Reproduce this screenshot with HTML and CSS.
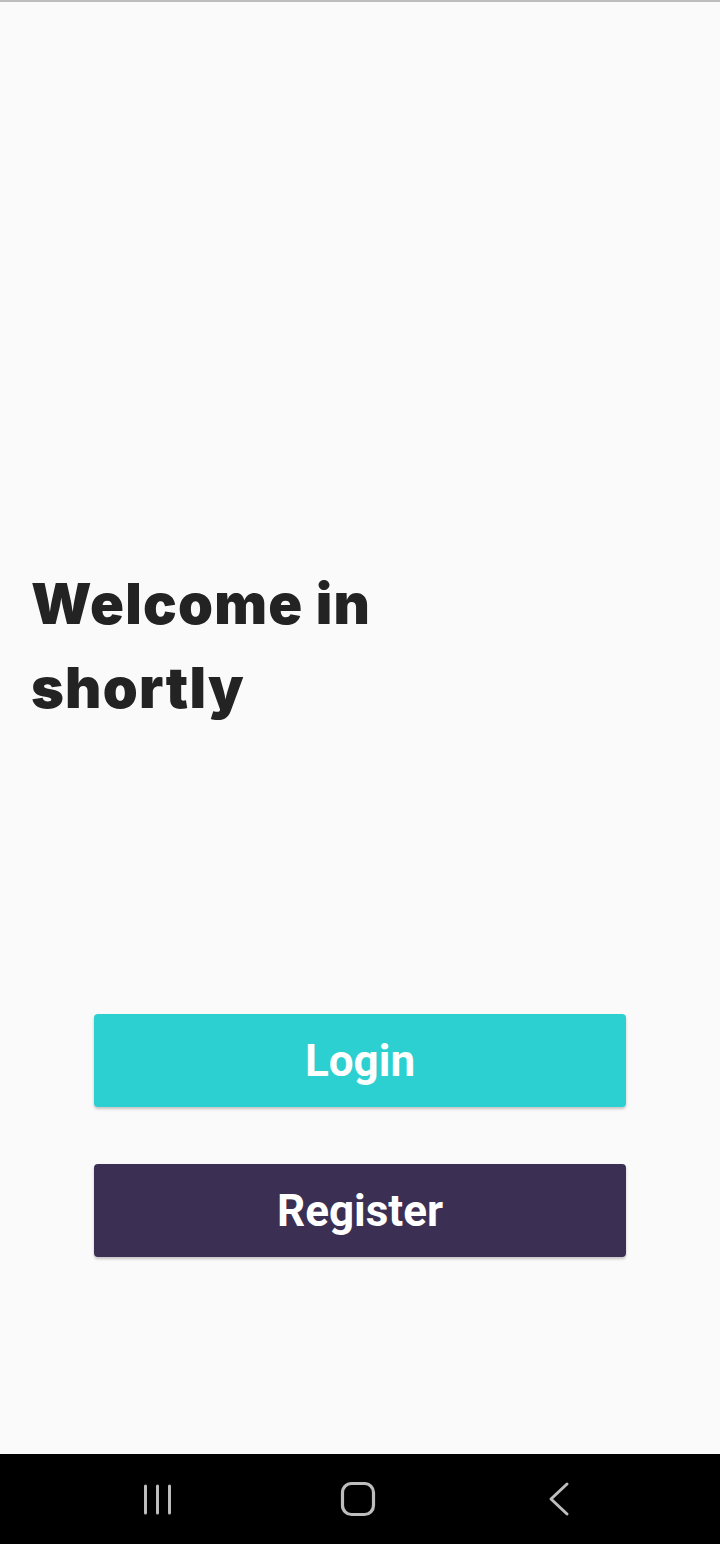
FILE: index.html
```html
<!DOCTYPE html>
<html>
<head>
<meta charset="utf-8">
<link rel="stylesheet" href="styles.css">
</head>
<body>
<div class="screen">
  <div class="topline"></div>
  <main class="content">
    <h1 class="title">Welcome in<br>shortly</h1>
    <div class="actions">
      <button class="btn btn-login">Login</button>
      <button class="btn btn-register">Register</button>
    </div>
  </main>
  <nav class="navbar">
    <svg class="nav-icon" width="40" height="40" viewBox="0 0 40 40">
      <g stroke="#bdbdbd" stroke-width="3" stroke-linecap="round" fill="none">
        <line x1="7.5" y1="7" x2="7.5" y2="34"/>
        <line x1="19.5" y1="7" x2="19.5" y2="34"/>
        <line x1="31.5" y1="7" x2="31.5" y2="34"/>
      </g>
    </svg>
    <svg class="nav-icon" width="40" height="40" viewBox="0 0 40 40">
      <rect x="4.5" y="4.5" width="31" height="31" rx="9" stroke="#bdbdbd" stroke-width="3.2" fill="none"/>
    </svg>
    <svg class="nav-icon" width="40" height="40" viewBox="0 0 40 40">
      <polyline points="29,5 13,20 29,35" stroke="#bdbdbd" stroke-width="3" stroke-linecap="round" stroke-linejoin="round" fill="none"/>
    </svg>
  </nav>
</div>
</body>
</html>
```
FILE: styles.css
```css
html, body {
  margin: 0;
  padding: 0;
  background: #fafafa;
}
.screen {
  width: 720px;
  height: 1544px;
  display: flex;
  flex-direction: column;
  background: #fafafa;
}
.topline {
  height: 2px;
  background: #bdbdbd;
  flex: none;
}
.content {
  flex: 1;
  display: flex;
  flex-direction: column;
  padding: 0;
}
.title {
  margin: 560px 0 0 31px;
  font-family: Inter, "Noto Sans", sans-serif;
  font-weight: 900;
  font-size: 56px;
  line-height: 84px;
  letter-spacing: 1.2px;
  color: #232323;
}
.actions {
  margin-top: 284px;
  display: flex;
  flex-direction: column;
  align-items: center;
  gap: 57px;
}
.btn {
  width: 532px;
  height: 93px;
  border: none;
  border-radius: 4px;
  font-family: Roboto, "Liberation Sans", sans-serif;
  font-weight: 700;
  font-size: 44px;
  color: #ffffff;
  box-shadow: 0 2px 3px rgba(0,0,0,0.22);
  padding: 0;
  margin-left: 0;
}
.btn-login {
  background: #2cd0d0;
}
.btn-register {
  background: #3b3054;
}
.navbar {
  flex: none;
  height: 90px;
  background: #000;
  display: flex;
  align-items: center;
  justify-content: flex-start;
  gap: 160px;
  padding: 0 0 0 138px;
}
.nav-icon {
  display: block;
}
```
